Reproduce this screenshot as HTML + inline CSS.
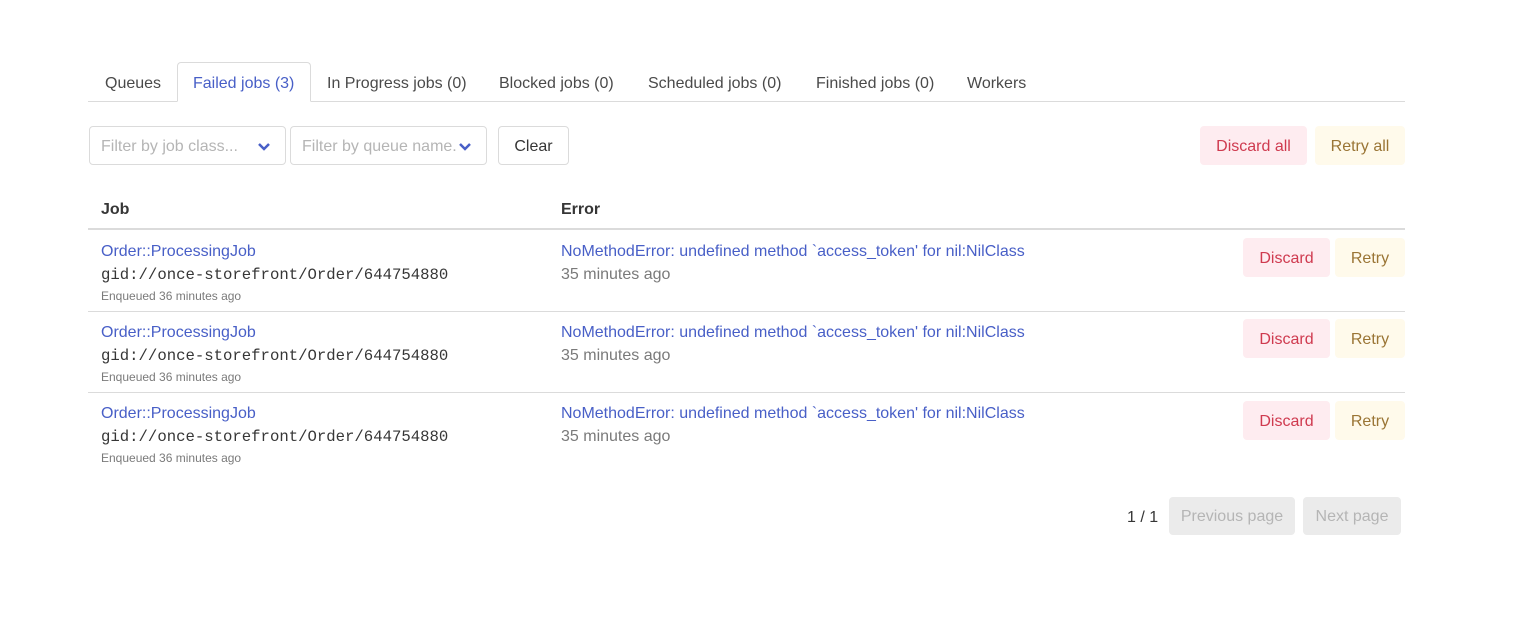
<!DOCTYPE html>
<html><head><meta charset="utf-8"><style>
*{box-sizing:border-box;margin:0;padding:0}
body{width:1536px;height:624px;background:#fff;font-family:"Liberation Sans",sans-serif;color:#4a4a4a;font-size:16px;position:relative;overflow:hidden}
.a{position:absolute;white-space:nowrap}
.tab{top:75px;color:#4a4a4a;font-size:16px}
.btn{position:absolute;border-radius:4px;display:flex;align-items:center;justify-content:center;font-size:16px;padding-top:2px}
.sel{position:absolute;top:126px;height:39px;border:1px solid #dbdbdb;border-radius:4px;color:#b5b5b5;font-size:16px;padding-left:11px;line-height:39px;overflow:hidden}
.sel svg{position:absolute;right:14px;top:15px}
.link{color:#485fc7}
.mono{font-family:"Liberation Mono",monospace;color:#363636;font-size:15.65px}
.small{font-size:12px;color:#7a7a7a}
.dg{background:#feecf0;color:#cf3a4f}
.wr{background:#fffaeb;color:#9a7535}
.pg{background:#ebebeb;color:#b5b5b5}
</style></head><body>
<div class="a" style="left:88px;top:101px;width:1317px;height:1px;background:#dbdbdb"></div>
<div class="a" style="left:177px;top:62px;width:134px;height:40px;border:1px solid #dbdbdb;border-bottom:1px solid #fff;border-radius:4px 4px 0 0;background:#fff"></div>
<div class="a tab" style="left:105px">Queues</div>
<div class="a tab" style="left:193px;color:#485fc7">Failed jobs (3)</div>
<div class="a tab" style="left:327px">In Progress jobs (0)</div>
<div class="a tab" style="left:499px">Blocked jobs (0)</div>
<div class="a tab" style="left:648px">Scheduled jobs (0)</div>
<div class="a tab" style="left:816px">Finished jobs (0)</div>
<div class="a tab" style="left:967px">Workers</div>

<div class="sel" style="left:89px;width:197px">Filter by job class...<svg width="14" height="10" viewBox="0 0 14 10"><path d="M2 2l5 5 5-5" fill="none" stroke="#485fc7" stroke-width="2.5"/></svg></div>
<div class="sel" style="left:290px;width:197px">Filter by queue name.<svg style="right:14px;background:#fff" width="14" height="10" viewBox="0 0 14 10"><path d="M2 2l5 5 5-5" fill="none" stroke="#485fc7" stroke-width="2.5"/></svg></div>
<div class="btn" style="left:498px;top:126px;width:71px;height:39px;border:1px solid #dbdbdb;color:#363636">Clear</div>
<div class="btn dg" style="left:1200px;top:126px;width:107px;height:39px">Discard all</div>
<div class="btn wr" style="left:1315px;top:126px;width:90px;height:39px">Retry all</div>

<div class="a" style="left:101px;top:201px;font-weight:bold;color:#363636">Job</div>
<div class="a" style="left:561px;top:201px;font-weight:bold;color:#363636">Error</div>
<div class="a" style="left:88px;top:228px;width:1317px;height:2px;background:#dbdbdb"></div>

<div class="a" style="left:88px;top:311px;width:1317px;height:1px;background:#dbdbdb"></div>
<div class="a" style="left:88px;top:392px;width:1317px;height:1px;background:#dbdbdb"></div>

<div class="a link" style="left:101px;top:243px">Order::ProcessingJob</div>
<div class="a mono" style="left:101px;top:266px">gid://once-storefront/Order/644754880</div>
<div class="a small" style="left:101px;top:289px">Enqueued 36 minutes ago</div>
<div class="a link" style="left:561px;top:243px">NoMethodError: undefined method `access_token' for nil:NilClass</div>
<div class="a" style="left:561px;top:266px;color:#7a7a7a">35 minutes ago</div>
<div class="btn dg" style="left:1243px;top:238px;width:87px;height:39px">Discard</div>
<div class="btn wr" style="left:1335px;top:238px;width:70px;height:39px">Retry</div>

<div class="a link" style="left:101px;top:324px">Order::ProcessingJob</div>
<div class="a mono" style="left:101px;top:347px">gid://once-storefront/Order/644754880</div>
<div class="a small" style="left:101px;top:370px">Enqueued 36 minutes ago</div>
<div class="a link" style="left:561px;top:324px">NoMethodError: undefined method `access_token' for nil:NilClass</div>
<div class="a" style="left:561px;top:347px;color:#7a7a7a">35 minutes ago</div>
<div class="btn dg" style="left:1243px;top:319px;width:87px;height:39px">Discard</div>
<div class="btn wr" style="left:1335px;top:319px;width:70px;height:39px">Retry</div>

<div class="a link" style="left:101px;top:405px">Order::ProcessingJob</div>
<div class="a mono" style="left:101px;top:428px">gid://once-storefront/Order/644754880</div>
<div class="a small" style="left:101px;top:451px">Enqueued 36 minutes ago</div>
<div class="a link" style="left:561px;top:405px">NoMethodError: undefined method `access_token' for nil:NilClass</div>
<div class="a" style="left:561px;top:428px;color:#7a7a7a">35 minutes ago</div>
<div class="btn dg" style="left:1243px;top:401px;width:87px;height:39px">Discard</div>
<div class="btn wr" style="left:1335px;top:401px;width:70px;height:39px">Retry</div>

<div class="a" style="left:1127px;top:509px;color:#363636">1 / 1</div>
<div class="btn pg" style="left:1169px;top:497px;width:126px;height:38px">Previous page</div>
<div class="btn pg" style="left:1303px;top:497px;width:98px;height:38px">Next page</div>
</body></html>
